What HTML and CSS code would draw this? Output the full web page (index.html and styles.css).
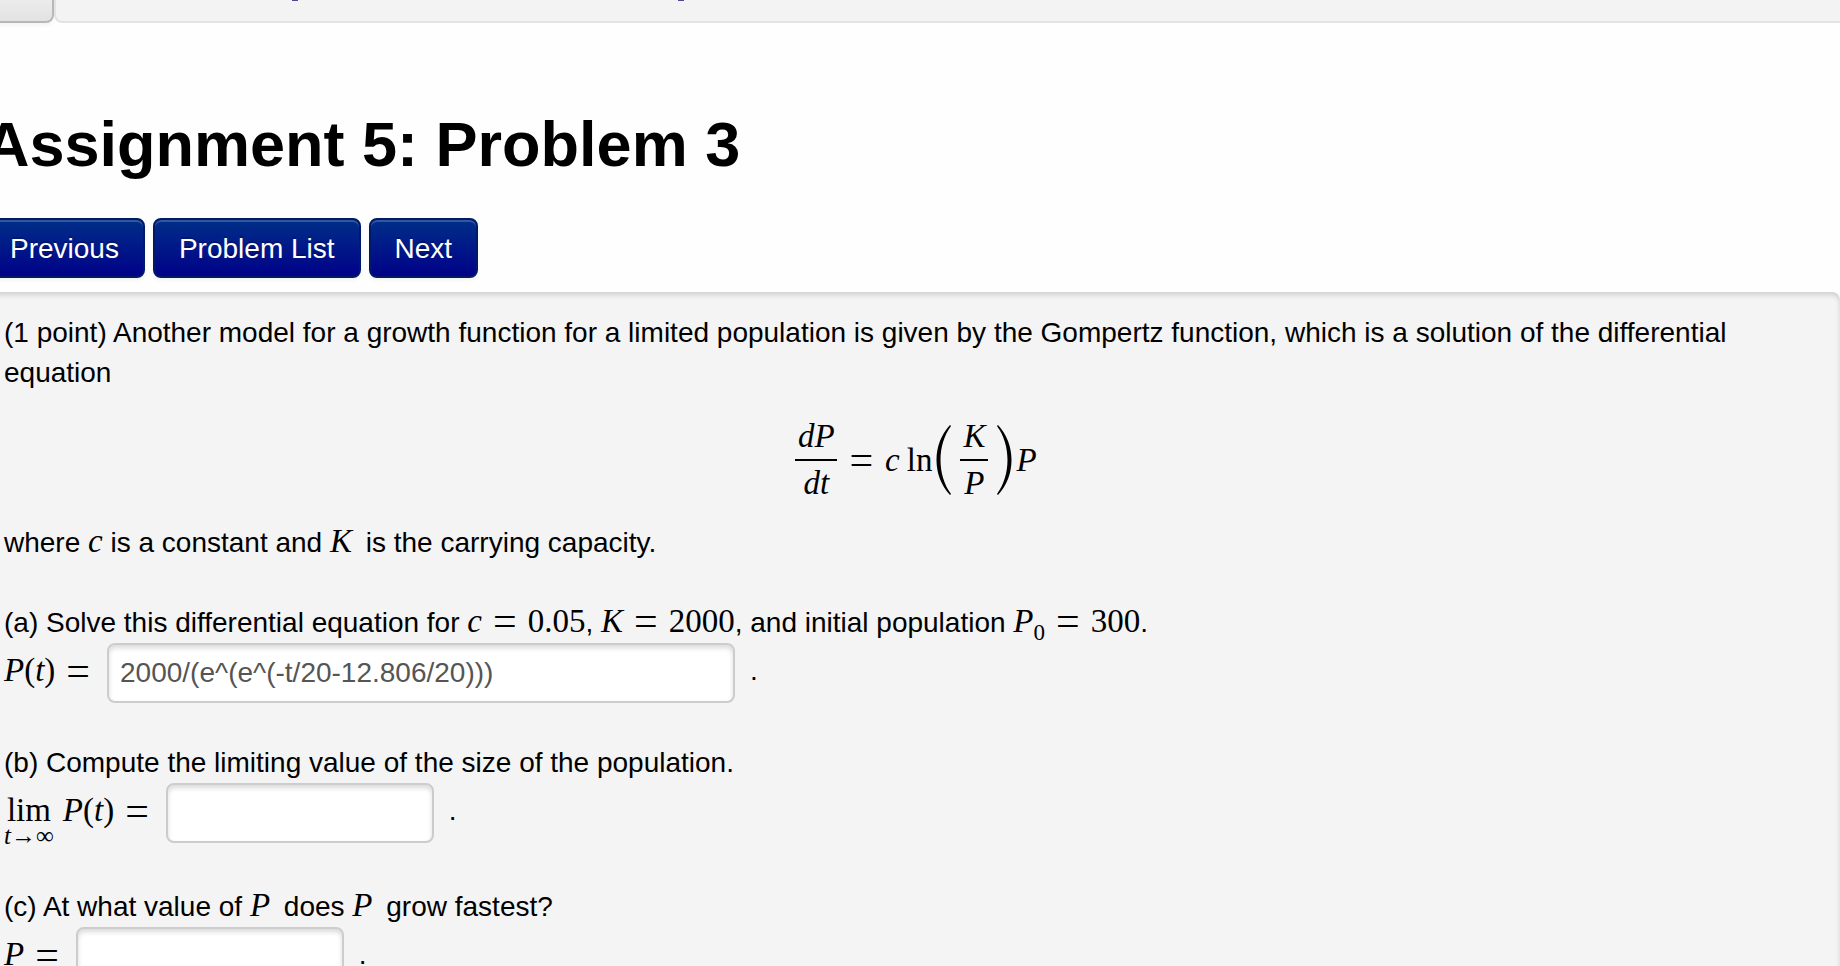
FILE: index.html
```
<!DOCTYPE html>
<html lang="en">
<head>
    <meta charset="UTF-8">
    <meta name="viewport" content="width=device-width, initial-scale=1.0">
    <title>Assignment 5: Problem 3</title>
    <link rel="stylesheet" href="styles.css">
</head>
<body>

<div class="page">
    <div class="topbar">
        <div class="toggle"></div>
        <div class="breadcrumb">
            <span class="mark"></span>
            <span class="mark"></span>
        </div>
    </div>

    <h1>Assignment 5: Problem 3</h1>

    <nav class="problem-nav">
        <button type="button">Previous</button>
        <button type="button">Problem List</button>
        <button type="button">Next</button>
    </nav>

    <main class="problem">
        <p>(1 point) Another model for a growth function for a limited population is given by the Gompertz function, which is a solution of the differential equation</p>

        <div class="formula">
            <span class="frac"><i class="num">dP</i><i>dt</i></span>
            <span class="eq">=</span>
            <i>c</i>
            <span class="fn">ln</span>
            <svg class="paren" width="16" height="70" viewBox="0 0 16 70"><path d="M14 0C-4 19-4 51 14 70L15 69C1 50 1 20 15 1Z"/></svg>
            <span class="frac small"><i class="num">K</i><i>P</i></span>
            <svg class="paren" width="16" height="70" viewBox="0 0 16 70"><path d="M2 0C20 19 20 51 2 70L1 69C15 50 15 20 1 1Z"/></svg>
            <i class="last">P</i>
        </div>

        <p>where <i class="math">c</i> is a constant and <i class="math wide">K</i> is the carrying capacity.</p>

        <p class="part">(a) Solve this differential equation for <span class="math"><i>c</i><span class="eq">=</span>0.05</span>, <span class="math"><i>K</i><span class="eq">=</span>2000</span>, and initial population <span class="math"><i>P</i><sub>0</sub><span class="eq">=</span>300</span>.</p>
        <div class="answer">
            <label class="math" for="ansA"><i>P</i>(<i>t</i>)<span class="eq">=</span></label>
            <input type="text" id="ansA" class="long" value="2000/(e^(e^(-t/20-12.806/20)))">
            <span class="dot">.</span>
        </div>

        <p class="part">(b) Compute the limiting value of the size of the population.</p>
        <div class="answer limit-row">
            <label class="math" for="ansB"><span class="limit"><span>lim</span><span class="under"><i>t</i>→∞</span></span><i>P</i>(<i>t</i>)<span class="eq">=</span></label>
            <input type="text" id="ansB">
            <span class="dot">.</span>
        </div>

        <p class="part">(c) At what value of <i class="math wide">P</i> does <i class="math wide">P</i> grow fastest?</p>
        <div class="answer">
            <label class="math" for="ansC"><i>P</i><span class="eq">=</span></label>
            <input type="text" id="ansC">
            <span class="dot">.</span>
        </div>
    </main>
</div>

</body>
</html>
```
FILE: styles.css
```
body {
    margin: 0;
    height: 100vh;
    overflow: hidden;
    background-color: #fefefe;
    color: #000;
    font-family: "Liberation Sans", Arial, sans-serif;
    font-size: 28px;
    line-height: 40px;
}

.page {
    margin-left: -16px;
}

.topbar {
    display: flex;
    height: 23px;
}

.toggle {
    box-sizing: border-box;
    width: 70px;
    border: solid #b8b8b8;
    border-width: 0 2px 2px 0;
    border-radius: 0 0 8px 0;
    background: linear-gradient(#ececec, #e2e2e2);
    box-shadow: 0 2px 4px rgba(0, 0, 0, 0.05);
}

.breadcrumb {
    box-sizing: border-box;
    flex: 1;
    display: flex;
    gap: 380px;
    padding-left: 236px;
    border: solid #e3e3e3;
    border-width: 0 0 2px 2px;
    border-radius: 0 0 0 8px;
    background-color: #f3f3f3;
}

.mark {
    width: 6px;
    height: 1px;
    background-color: #4a4a90;
}

h1 {
    margin: 81px 0 34px;
    font-size: 63px;
    line-height: 80px;
}

.problem-nav {
    display: flex;
    gap: 8px;
    margin-bottom: 14px;
}

.problem-nav button {
    box-sizing: border-box;
    height: 60px;
    padding: 1px 24px 0;
    border: 2px solid #001a66;
    border-radius: 8px;
    background: linear-gradient(#003088, #000088);
    background-origin: border-box;
    box-shadow: inset 0 2px 0 rgba(255, 255, 255, 0.2), 0 2px 4px rgba(0, 0, 0, 0.05);
    color: #fff;
    font: inherit;
    text-shadow: 0 -2px 0 rgba(0, 0, 0, 0.25);
    cursor: pointer;
}

.problem {
    min-height: 674px;
    padding: 21px 12px 0 20px;
    box-sizing: border-box;
    border-radius: 8px;
    background-color: #f4f4f4;
    box-shadow: inset 0 3px 5px rgba(0, 0, 0, 0.15);
}

p {
    margin: 0;
}

.part {
    margin-top: 40px;
}

/* math */
.math,
.formula {
    font-family: "Liberation Serif", "Times New Roman", serif;
    font-size: 33px;
}

.math {
    line-height: 0;
}

.wide {
    margin-right: 6px;
}

.eq {
    margin: 0 11px;
    font-size: 42px;
    line-height: 0;
    vertical-align: -3px;
}

sub {
    font-size: 23px;
    line-height: 0;
}

.formula {
    display: flex;
    justify-content: center;
    align-items: center;
    height: 100px;
    margin: 17px 0 13px;
}

.frac {
    display: flex;
    flex-direction: column;
    align-items: center;
    width: 42px;
    line-height: 45px;
}

.frac.small {
    width: 28px;
    margin: 0 8px;
}

.num {
    align-self: stretch;
    border-bottom: 2px solid #000;
    text-align: center;
}

.formula .eq {
    margin: 0 12px;
}

.fn {
    margin: 0 4px 0 7px;
}

.last {
    margin-left: 4px;
}

/* answer rows */
.answer {
    display: flex;
    align-items: flex-start;
}

.answer label {
    display: flex;
    line-height: 54px;
}

.answer .eq {
    margin-right: 17px;
    padding-top: 2px;
    line-height: 52px;
}

.limit-row {
    min-height: 64px;
}

.limit {
    display: flex;
    flex-direction: column;
    align-items: center;
    margin-right: 9px;
}

.under {
    margin-top: -12px;
    font-size: 25px;
    line-height: 22px;
}

input {
    box-sizing: border-box;
    width: 268px;
    height: 60px;
    margin: 0;
    padding: 0 11px;
    border: 2px solid #ccc;
    border-radius: 8px;
    background-color: #fff;
    box-shadow: inset 0 3px 5px rgba(0, 0, 0, 0.15);
    color: #555;
    font: inherit;
}

.long {
    width: 628px;
}

.dot {
    margin-left: 15px;
    line-height: 56px;
}
```
